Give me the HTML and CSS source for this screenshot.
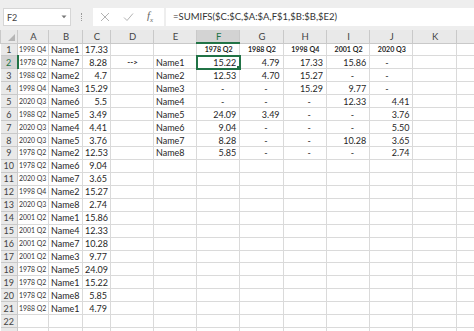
FILE: index.html
```html
<!DOCTYPE html>
<html lang="en">
<head>
    <meta charset="UTF-8">
    <title>Sheet1</title>
    <link rel="stylesheet" href="styles.css">
</head>
<body>
    <div class="formula-bar">
        <div class="name-box">
            <span>F2</span>
            <svg class="caret" width="6" height="4" viewBox="0 0 6 4"><path d="M0.5 0.5 L3 3.2 L5.5 0.5 Z" fill="#777"/></svg>
        </div>
        <div class="grip"></div>
        <div class="fn-buttons">
            <svg width="10" height="10" viewBox="0 0 10 10"><path d="M1 1 L9 9 M9 1 L1 9" stroke="#b3b3b3" stroke-width="1"/></svg>
            <svg width="11" height="10" viewBox="0 0 11 10"><path d="M1 5.5 L4 8.5 L10 1.5" stroke="#b3b3b3" stroke-width="1" fill="none"/></svg>
            <span class="fx">f<sub>x</sub></span>
        </div>
        <div class="formula">=SUMIFS($C:$C,$A:$A,F$1,$B:$B,$E2)</div>
    </div>

    <table class="sheet">
        <colgroup>
            <col style="width:17px"><col style="width:31px"><col style="width:34px"><col style="width:28px">
            <col style="width:43px"><col style="width:43px"><col style="width:43.3px"><col style="width:43.3px">
            <col style="width:43.3px"><col style="width:43.3px"><col style="width:43.3px"><col style="width:43.3px">
            <col style="width:18.2px">
        </colgroup>
        <thead>
            <tr>
                <th class="corner"></th><th>A</th><th>B</th><th>C</th><th>D</th><th>E</th>
                <th class="active">F</th><th>G</th><th>H</th><th>I</th><th>J</th><th>K</th><th></th>
            </tr>
        </thead>
        <tbody>
            <tr><th>1</th><td class="q">1998 Q4</td><td>Name1</td><td class="n">17.33</td><td></td><td></td>
                <td class="h">1978 Q2</td><td class="h">1988 Q2</td><td class="h">1998 Q4</td><td class="h">2001 Q2</td><td class="h">2020 Q3</td><td></td><td></td></tr>
            <tr><th class="active">2</th><td class="q">1978 Q2</td><td>Name7</td><td class="n">8.28</td><td class="arrow">--&gt;</td><td>Name1</td>
                <td class="n sel">15.22</td><td class="n">4.79</td><td class="n">17.33</td><td class="n">15.86</td><td class="d last">-</td><td></td><td></td></tr>
            <tr><th>3</th><td class="q">1988 Q2</td><td>Name2</td><td class="n">4.7</td><td></td><td>Name2</td>
                <td class="n">12.53</td><td class="n">4.70</td><td class="n">15.27</td><td class="d">-</td><td class="d last">-</td><td></td><td></td></tr>
            <tr><th>4</th><td class="q">1998 Q4</td><td>Name3</td><td class="n">15.29</td><td></td><td>Name3</td>
                <td class="d">-</td><td class="d">-</td><td class="n">15.29</td><td class="n">9.77</td><td class="d last">-</td><td></td><td></td></tr>
            <tr><th>5</th><td class="q">2020 Q3</td><td>Name6</td><td class="n">5.5</td><td></td><td>Name4</td>
                <td class="d">-</td><td class="d">-</td><td class="d">-</td><td class="n">12.33</td><td class="n">4.41</td><td></td><td></td></tr>
            <tr><th>6</th><td class="q">1988 Q2</td><td>Name5</td><td class="n">3.49</td><td></td><td>Name5</td>
                <td class="n">24.09</td><td class="n">3.49</td><td class="d">-</td><td class="d">-</td><td class="n">3.76</td><td></td><td></td></tr>
            <tr><th>7</th><td class="q">2020 Q3</td><td>Name4</td><td class="n">4.41</td><td></td><td>Name6</td>
                <td class="n">9.04</td><td class="d">-</td><td class="d">-</td><td class="d">-</td><td class="n">5.50</td><td></td><td></td></tr>
            <tr><th>8</th><td class="q">2020 Q3</td><td>Name5</td><td class="n">3.76</td><td></td><td>Name7</td>
                <td class="n">8.28</td><td class="d">-</td><td class="d">-</td><td class="n">10.28</td><td class="n">3.65</td><td></td><td></td></tr>
            <tr><th>9</th><td class="q">1978 Q2</td><td>Name2</td><td class="n">12.53</td><td></td><td>Name8</td>
                <td class="n">5.85</td><td class="d">-</td><td class="d">-</td><td class="d">-</td><td class="n">2.74</td><td></td><td></td></tr>
            <tr><th>10</th><td class="q">1978 Q2</td><td>Name6</td><td class="n">9.04</td><td></td><td></td><td></td><td></td><td></td><td></td><td></td><td></td><td></td></tr>
            <tr><th>11</th><td class="q">2020 Q3</td><td>Name7</td><td class="n">3.65</td><td></td><td></td><td></td><td></td><td></td><td></td><td></td><td></td><td></td></tr>
            <tr><th>12</th><td class="q">1998 Q4</td><td>Name2</td><td class="n">15.27</td><td></td><td></td><td></td><td></td><td></td><td></td><td></td><td></td><td></td></tr>
            <tr><th>13</th><td class="q">2020 Q3</td><td>Name8</td><td class="n">2.74</td><td></td><td></td><td></td><td></td><td></td><td></td><td></td><td></td><td></td></tr>
            <tr><th>14</th><td class="q">2001 Q2</td><td>Name1</td><td class="n">15.86</td><td></td><td></td><td></td><td></td><td></td><td></td><td></td><td></td><td></td></tr>
            <tr><th>15</th><td class="q">2001 Q2</td><td>Name4</td><td class="n">12.33</td><td></td><td></td><td></td><td></td><td></td><td></td><td></td><td></td><td></td></tr>
            <tr><th>16</th><td class="q">2001 Q2</td><td>Name7</td><td class="n">10.28</td><td></td><td></td><td></td><td></td><td></td><td></td><td></td><td></td><td></td></tr>
            <tr><th>17</th><td class="q">2001 Q2</td><td>Name3</td><td class="n">9.77</td><td></td><td></td><td></td><td></td><td></td><td></td><td></td><td></td><td></td></tr>
            <tr><th>18</th><td class="q">1978 Q2</td><td>Name5</td><td class="n">24.09</td><td></td><td></td><td></td><td></td><td></td><td></td><td></td><td></td><td></td></tr>
            <tr><th>19</th><td class="q">1978 Q2</td><td>Name1</td><td class="n">15.22</td><td></td><td></td><td></td><td></td><td></td><td></td><td></td><td></td><td></td></tr>
            <tr><th>20</th><td class="q">1978 Q2</td><td>Name8</td><td class="n">5.85</td><td></td><td></td><td></td><td></td><td></td><td></td><td></td><td></td><td></td></tr>
            <tr><th>21</th><td class="q">1988 Q2</td><td>Name1</td><td class="n">4.79</td><td></td><td></td><td></td><td></td><td></td><td></td><td></td><td></td><td></td></tr>
            <tr><th>22</th><td></td><td></td><td></td><td></td><td></td><td></td><td></td><td></td><td></td><td></td><td></td><td></td></tr>
            <tr><th></th><td></td><td></td><td></td><td></td><td></td><td></td><td></td><td></td><td></td><td></td><td></td><td></td></tr>
        </tbody>
    </table>
</body>
</html>
```

FILE: styles.css
```css
:root {
    --excel-green: #217346;
    --grid-color: #dadada;
    --header-bg: #e9e9e9;
}

body {
    margin: 0;
    width: 474px;
    height: 331px;
    overflow: hidden;
    background-color: white;
    font-family: Lato, 'Liberation Sans', sans-serif;
    color: #1f1f1f;
}

/* formula bar */
.formula-bar {
    height: 30px;
    box-sizing: border-box;
    padding: 8px 0 0 3px;
    display: flex;
    align-items: flex-start;
    background-color: #eeeeee;
}

.name-box {
    width: 68px;
    height: 18px;
    box-sizing: border-box;
    background-color: white;
    border: 1px solid #d6d6d6;
    display: flex;
    align-items: center;
    justify-content: space-between;
    padding: 0 3px 0 3px;
    font-size: 9px;
    color: #444;
}

.grip {
    width: 1px;
    height: 8px;
    margin: 5px 10px 0 10px;
    border-left: 1px dotted #9a9a9a;
}

.fn-buttons {
    width: 71px;
    height: 18px;
    box-sizing: border-box;
    background-color: white;
    display: flex;
    align-items: center;
    gap: 13px;
    padding-left: 7px;
}

.fx {
    font-family: 'Liberation Serif', serif;
    font-style: italic;
    font-size: 11px;
    color: #666;
}

.fx sub {
    font-size: 7px;
}

.formula {
    flex: 1;
    height: 18px;
    margin-left: 2px;
    box-sizing: border-box;
    background-color: white;
    padding-left: 7px;
    font-size: 9.5px;
    line-height: 18px;
    color: #333;
    white-space: nowrap;
}

/* grid */
.sheet {
    border-collapse: collapse;
    table-layout: fixed;
    width: 474px;
}

.sheet th,
.sheet td {
    height: 12.94px;
    padding: 0 1px 0 2px;
    box-sizing: border-box;
    white-space: nowrap;
    overflow: hidden;
    font-size: 9px;
    line-height: 11px;
    border: 1px solid var(--grid-color);
}

.sheet thead th {
    height: 13px;
    background-color: var(--header-bg);
    color: #444;
    font-weight: normal;
    font-size: 9.5px;
    text-align: center;
    border-color: #c9c9c9;
    border-top: none;
}

.sheet tbody th {
    background-color: var(--header-bg);
    color: #444;
    font-weight: normal;
    font-size: 9px;
    text-align: center;
    padding: 0;
    border-color: #c9c9c9;
    border-left: none;
}

.sheet thead th.active {
    background-color: #d3d3d3;
    color: var(--excel-green);
    border-bottom: 2px solid var(--excel-green);
}

.sheet tbody th.active {
    background-color: #d3d3d3;
    color: var(--excel-green);
    border-right: 2px solid var(--excel-green);
}

.sheet .corner {
    position: relative;
}

.sheet .corner::after {
    content: '';
    position: absolute;
    right: 2px;
    bottom: 2px;
    border-left: 7px solid transparent;
    border-bottom: 7px solid #b5b5b5;
}

.sheet .q {
    font-size: 6.9px;
    padding: 0 0 0 1px;
    color: #333;
}

.sheet .n {
    text-align: right;
    padding-right: 3px;
}

.sheet .d {
    text-align: right;
    padding-right: 15px;
}

.sheet .d.last {
    padding-right: 24px;
}

.sheet .h {
    font-weight: bold;
    font-size: 7.1px;
    text-align: center;
}

.sheet .arrow {
    text-align: center;
    font-weight: bold;
    font-size: 8px;
}

.sheet .sel {
    position: relative;
    outline: 2px solid var(--excel-green);
    outline-offset: -1px;
}

.sheet .sel::after {
    content: '';
    position: absolute;
    right: -3px;
    bottom: -3px;
    width: 4px;
    height: 4px;
    background-color: var(--excel-green);
    border: 1px solid white;
}
```
